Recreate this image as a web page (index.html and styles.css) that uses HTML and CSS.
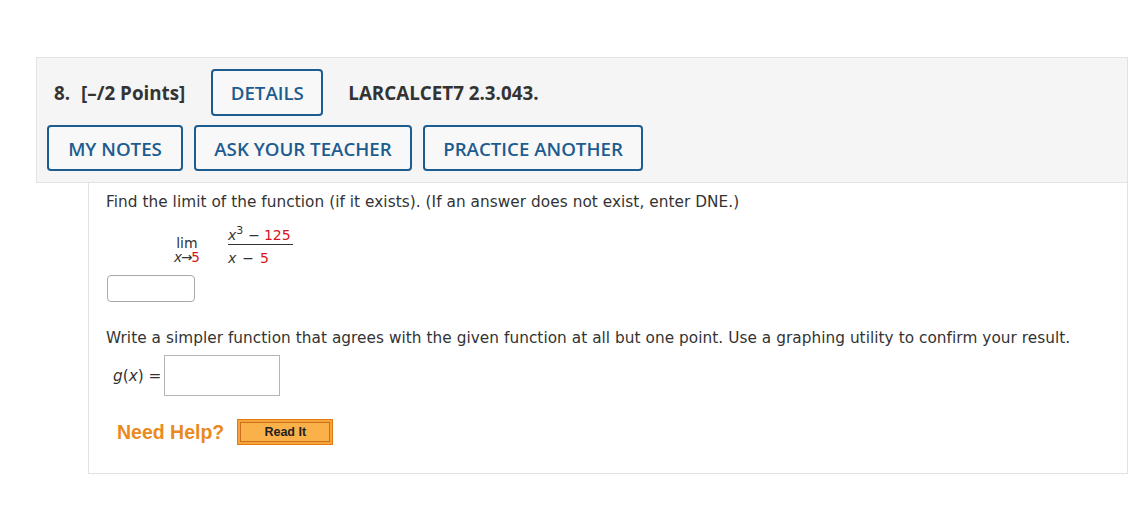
FILE: index.html
```html
<!DOCTYPE html>
<html>
<head>
<meta charset="utf-8">
<link rel="stylesheet" href="styles.css">
</head>
<body>
<div class="question">
  <div class="q-header">
    <div class="row row-top">
      <span class="q-num">8.</span>
      <span class="q-points">[–/2 Points]</span>
      <button class="btn btn-details">DETAILS</button>
      <span class="q-code">LARCALCET7 2.3.043.</span>
    </div>
    <div class="row row-actions">
      <button class="btn btn-notes">MY NOTES</button>
      <button class="btn btn-ask">ASK YOUR TEACHER</button>
      <button class="btn btn-practice">PRACTICE ANOTHER</button>
    </div>
  </div>
  <div class="q-body">
    <p class="para">Find the limit of the function (if it exists). (If an answer does not exist, enter DNE.)</p>
    <div class="limit">
      <div class="lim">
        <span class="lim-word">lim</span>
        <span class="lim-sub"><i>x</i><span class="arrow">→</span><span class="red">5</span></span>
      </div>
      <div class="frac">
        <span class="num"><i>x</i><sup>3</sup><span class="op">−</span><span class="red">125</span></span>
        <span class="den"><i>x</i><span class="op op-wide">−</span><span class="red">5</span></span>
      </div>
    </div>
    <div class="answer-small"></div>
    <p class="para para2">Write a simpler function that agrees with the given function at all but one point. Use a graphing utility to confirm your result.</p>
    <div class="gx-row">
      <span class="gx"><i>g</i>(<i>x</i>) =</span>
      <div class="answer-big"></div>
    </div>
    <div class="help-row">
      <span class="need-help">Need Help?</span>
      <span class="read-it"><span class="read-inner">Read It</span></span>
    </div>
  </div>
</div>
</body>
</html>
```

FILE: styles.css
```css
html, body {
  margin: 0;
  padding: 0;
  background: #ffffff;
}

.question {
  margin: 57px 0 0 36px;
  width: 1092px;
}

.q-header {
  background: #f5f5f5;
  border: 1px solid #e2e2e2;
  padding: 11px 10px 11px 10px;
  font-family: "Open Sans", "Liberation Sans", sans-serif;
}

.row {
  display: flex;
  align-items: center;
}

.row-top {
  padding-left: 7px;
  margin-bottom: 9px;
}

.q-num,
.q-points,
.q-code {
  font-size: 18.8px;
  font-weight: 700;
  color: #333333;
}

.q-num {
  margin-right: 11px;
}

.q-points {
  margin-right: 26px;
}

.q-code {
  margin-left: 25px;
}

.btn {
  font-family: "Open Sans", "Liberation Sans", sans-serif;
  font-size: 18.7px;
  font-weight: 600;
  color: #1d5c8f;
  background: #f8f8f8;
  border: 2px solid #1d5c8f;
  border-radius: 4px;
  height: 47px;
  padding: 0;
  box-sizing: border-box;
}

.btn-details { width: 112px; }

.row-actions {
  gap: 11px;
}

.row-actions .btn {
  height: 46px;
}

.btn-notes { width: 136px; }
.btn-ask { width: 218px; }
.btn-practice { width: 220px; }

.q-body {
  margin-left: 52px;
  border: 1px solid #e2e2e2;
  border-top: none;
  height: 290px;
  padding: 0 0 0 17px;
  font-family: "DejaVu Sans", Verdana, sans-serif;
  color: #333333;
  font-size: 15.3px;
  letter-spacing: 0.05px;
}

.para {
  margin: 0;
  padding-top: 10px;
  line-height: 18px;
}

.red {
  color: #d8141c;
}

.limit {
  display: flex;
  align-items: flex-start;
  margin: 15px 0 0 68px;
  font-size: 14px;
  letter-spacing: 0;
}

.lim {
  display: flex;
  flex-direction: column;
  align-items: center;
  line-height: 14px;
  padding-top: 10px;
}

.lim-sub {
  font-size: 13.5px;
}

.arrow {
  display: inline-block;
  margin: 0 -1px;
}

.frac {
  display: flex;
  flex-direction: column;
  align-items: flex-start;
  margin-left: 28px;
  line-height: 18px;
}

.num {
  border-bottom: 1px solid #333333;
  padding: 0 2px 0 0;
}

.num sup {
  font-size: 11px;
  line-height: 0;
  vertical-align: 6px;
}

.op {
  margin: 0 4px 0 5px;
}

.op-wide {
  margin: 0 6px 0 6px;
}

.den {
  padding: 4px 0 0 0;
}

.answer-small {
  width: 86px;
  height: 25px;
  border: 1px solid #a9a9a9;
  border-radius: 4px;
  margin: 8px 0 0 1px;
}

.para2 {
  padding-top: 27px;
}

.gx-row {
  display: flex;
  align-items: center;
  margin: 8px 0 0 7px;
}

.gx {
  margin-right: 3px;
  letter-spacing: 0;
}

.answer-big {
  width: 114px;
  height: 39px;
  border: 1px solid #b5b5b5;
}

.help-row {
  display: flex;
  align-items: center;
  margin: 23px 0 0 11px;
}

.need-help {
  font-family: "Liberation Sans", Arial, sans-serif;
  font-weight: 700;
  font-size: 19.5px;
  letter-spacing: 0;
  color: #ea8a1c;
  margin-right: 13px;
}

.read-it {
  display: inline-flex;
  padding: 2px;
  background: #f8a43a;
  border: 1px solid #e07a12;
}

.read-inner {
  display: inline-block;
  width: 90px;
  height: 20px;
  box-sizing: border-box;
  border: 1px solid #c9701a;
  background: #fbb14a;
  font-family: "Liberation Sans", Arial, sans-serif;
  font-weight: 700;
  font-size: 12.5px;
  letter-spacing: 0;
  color: #222222;
  text-align: center;
  line-height: 18px;
}
```
